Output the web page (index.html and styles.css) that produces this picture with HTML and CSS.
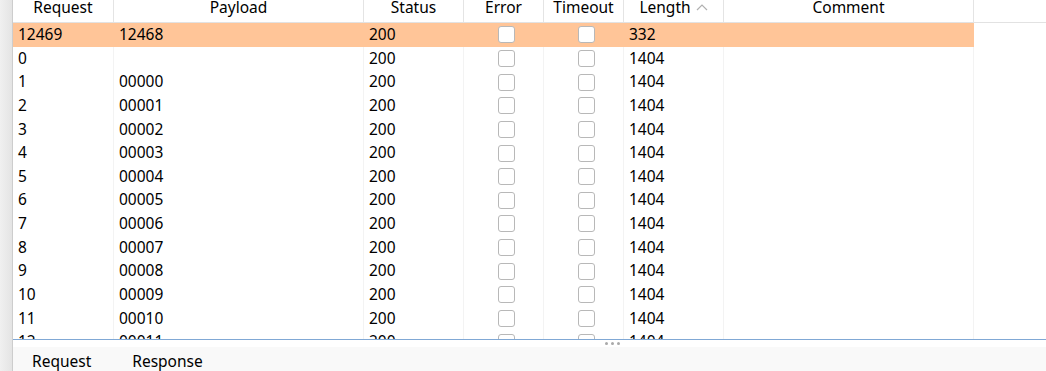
FILE: index.html
```html
<!DOCTYPE html>
<html lang="en">
<head>
    <meta charset="UTF-8">
    <title>Intruder results</title>
    <link rel="stylesheet" href="styles.css">
</head>
<body>
    <div class="gutter"></div>
    <div class="main">
        <div class="results">
            <div class="head">
                <div class="hcell">Request</div>
                <div class="hcell">Payload</div>
                <div class="hcell">Status</div>
                <div class="hcell">Error</div>
                <div class="hcell">Timeout</div>
                <div class="hcell">Length
                    <svg class="sort" width="12" height="8" viewBox="0 0 12 8"><path d="M1 7 L6 2 L11 7" fill="none" stroke="#b0b0b0" stroke-width="1.2"/></svg>
                </div>
                <div class="hcell">Comment</div>
            </div>
            <div id="rows"></div>
        </div>
        <div class="grip"><span></span><span></span><span></span></div>
        <div class="tabs">
            <span class="tab">Request</span>
            <span class="tab">Response</span>
        </div>
    </div>
    <script>
        // first row is the highlighted hit, then the baseline and the zero-padded payloads
        const rows = [['12469', '12468', '200', '332', true], ['0', '', '200', '1404']];
        for (let i = 1; i <= 12; i++) {
            rows.push([String(i), String(i - 1).padStart(5, '0'), '200', '1404']);
        }

        const box = document.getElementById('rows');
        rows.forEach(r => {
            const row = document.createElement('div');
            row.className = r[4] ? 'row selected' : 'row';
            row.innerHTML =
                `<div class="cell">${r[0]}</div>` +
                `<div class="cell">${r[1]}</div>` +
                `<div class="cell">${r[2]}</div>` +
                `<div class="cell check"><i class="box"></i></div>` +
                `<div class="cell check"><i class="box"></i></div>` +
                `<div class="cell">${r[3]}</div>` +
                `<div class="cell"></div>`;
            box.appendChild(row);
        });
    </script>
</body>
</html>
```

FILE: styles.css
```css
html, body {
    margin: 0;
    height: 100%;
}
body {
    display: flex;
    font-family: "Noto Sans", "Liberation Sans", sans-serif;
    font-size: 15.5px;
    color: #000;
    background: #fff;
    overflow: hidden;
}
.gutter {
    width: 12px;
    flex: none;
    background: linear-gradient(to right, #f0f0f0, #e4e4e4);
    border-right: 1px solid #cdcdcd;
}
.main {
    flex: 1;
    display: flex;
    flex-direction: column;
    min-width: 0;
}
.results {
    height: 339px;
    flex: none;
    overflow: hidden;
    border-bottom: 1px solid #80a8d5;
    background: linear-gradient(to right, transparent 960px, #f3f3f3 960px, #f3f3f3 961px, transparent 961px);
}
.head {
    display: flex;
    height: 22px;
    border-bottom: 1px solid #e2e2e2;
}
.hcell {
    box-sizing: border-box;
    display: flex;
    justify-content: center;
    align-items: flex-start;
    line-height: 14px;
    border-right: 1px solid #e4e4e4;
}
.row {
    display: flex;
    width: 961px;
    height: 23.65px;
}
.cell {
    box-sizing: border-box;
    line-height: 23.65px;
    padding-left: 5px;
    border-right: 1px solid #f3f3f3;
    white-space: nowrap;
}
.selected {
    background: #ffc598;
}
.selected .cell {
    border-right-color: transparent;
}
.hcell:nth-child(1), .cell:nth-child(1) { width: 101px; }
.hcell:nth-child(2), .cell:nth-child(2) { width: 250px; }
.hcell:nth-child(3), .cell:nth-child(3) { width: 100px; }
.hcell:nth-child(4), .cell:nth-child(4) { width: 80px; }
.hcell:nth-child(5), .cell:nth-child(5) { width: 80px; }
.hcell:nth-child(6), .cell:nth-child(6) { width: 100px; }
.hcell:nth-child(7), .cell:nth-child(7) { width: 250px; }
.sort {
    margin: 3px 0 0 5px;
}
.check {
    display: flex;
    justify-content: center;
    align-items: center;
    padding-left: 5px;
}
.box {
    box-sizing: border-box;
    width: 17px;
    height: 17px;
    border: 1.5px solid #b8b8b8;
    border-radius: 3px;
    background: #fff;
}
.grip {
    height: 7px;
    flex: none;
    display: flex;
    gap: 3px;
    padding: 2px 0 0 592px;
    box-sizing: border-box;
    background: #fff;
}
.grip span {
    width: 3px;
    height: 3px;
    border-radius: 50%;
    background: #a9a9a9;
}
.tabs {
    flex: 1;
    background: #f9f9f9;
    display: flex;
    gap: 41px;
    padding: 6px 0 0 19px;
}
.tab {
    line-height: 17px;
}
```
